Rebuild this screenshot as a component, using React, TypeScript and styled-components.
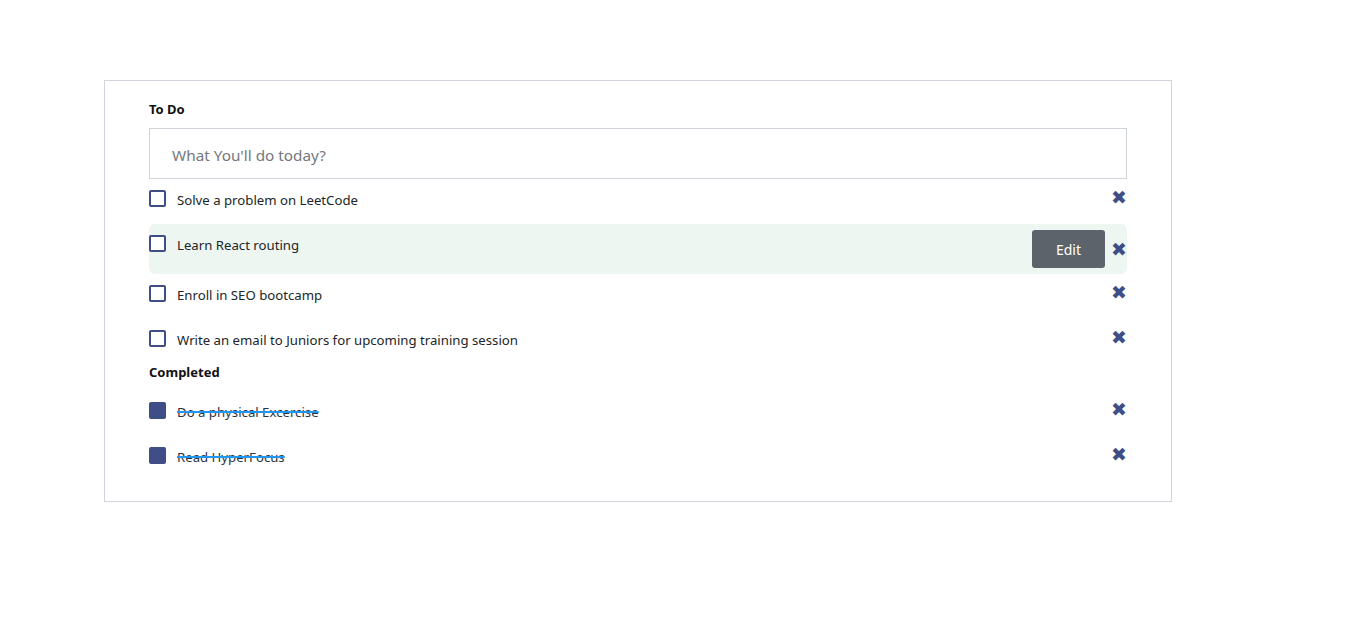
import React from "react";
import styled, { createGlobalStyle } from "styled-components";

const GlobalStyle = createGlobalStyle`
  body {
    margin: 0;
    background: #ffffff;
    font-family: "Noto Sans", "Open Sans", sans-serif;
    color: #212529;
  }
`;

const Page = styled.div`
  padding: 80px 0 0 104px;
`;

const Card = styled.section`
  box-sizing: border-box;
  width: 1068px;
  border: 1px solid #d3d3de;
  padding: 18px 44px 20px 44px;
`;

const Heading = styled.h4<{ $gap: number; $line: number }>`
  margin: 0 0 ${({ $gap }) => $gap}px 0;
  font-size: 13px;
  line-height: ${({ $line }) => $line}px;
  font-weight: 700;
  color: #111;
`;

const Input = styled.input`
  box-sizing: border-box;
  display: block;
  width: 100%;
  height: 51px;
  border: 1px solid #ced4da;
  border-radius: 0;
  padding: 2px 22px 0 22px;
  font-family: inherit;
  font-size: 15.3px;
  color: #212529;
  outline: none;

  &::placeholder {
    color: #74787e;
  }
`;

const List = styled.ul`
  list-style: none;
  margin: 0;
  padding: 0;
`;

const Row = styled.li<{ $hover?: boolean }>`
  display: flex;
  justify-content: space-between;
  min-height: 45px;
  border-radius: 6px;
  background: ${({ $hover }) => ($hover ? "#edf6f1" : "transparent")};
`;

const Label = styled.label`
  display: flex;
  align-items: flex-start;
  gap: 11px;
  align-self: flex-start;
  padding-top: 11px;
`;

const Box = styled.span<{ $checked?: boolean }>`
  box-sizing: border-box;
  width: 17px;
  height: 17px;
  border: 2px solid #3f4e87;
  border-radius: 2px;
  background: ${({ $checked }) => ($checked ? "#3f4e87" : "#fff")};
  flex-shrink: 0;
`;

const Text = styled.span<{ $done?: boolean }>`
  padding-top: 1px;
  font-size: 13.2px;
  line-height: 18px;
  color: ${({ $done }) => ($done ? "#2c3340" : "#212529")};
  text-decoration: ${({ $done }) => ($done ? "line-through" : "none")};
  text-decoration-color: #2196f3;
  text-decoration-thickness: 1.5px;
`;

const Actions = styled.div<{ $hover?: boolean }>`
  display: flex;
  align-items: ${({ $hover }) => ($hover ? "center" : "flex-start")};
  padding: ${({ $hover }) => ($hover ? "6px 0" : "10px 0 0 0")};
  gap: 6px;
`;

const EditButton = styled.button`
  width: 73px;
  height: 38px;
  border: none;
  border-radius: 3px;
  background: #5c636a;
  color: #fff;
  font-family: inherit;
  font-size: 14px;
  cursor: pointer;
`;

const Remove = styled.button`
  border: none;
  background: none;
  padding: 0;
  width: 15px;
  margin-right: 1px;
  color: #3f4e87;
  font-size: 19px;
  line-height: 17px;
  cursor: pointer;
`;

type Task = { text: string; hover?: boolean };

const todo: Task[] = [
  { text: "Solve a problem on LeetCode" },
  { text: "Learn React routing", hover: true },
  { text: "Enroll in SEO bootcamp" },
  { text: "Write an email to Juniors for upcoming training session" },
];

const done: Task[] = [
  { text: "Do a physical Excercise" },
  { text: "Read HyperFocus" },
];

const TaskRow = ({ task, checked }: { task: Task; checked?: boolean }) => (
  <Row $hover={task.hover}>
    <Label>
      <Box $checked={checked} />
      <Text $done={checked}>{task.text}</Text>
    </Label>
    <Actions $hover={task.hover}>
      {task.hover && <EditButton>Edit</EditButton>}
      <Remove aria-label="delete">✖</Remove>
    </Actions>
  </Row>
);

const App = () => {
  return (
    <>
      <GlobalStyle />
      <Page>
        <Card>
          <Heading $gap={9} $line={20}>
            To Do
          </Heading>
          <Input placeholder="What You'll do today?" />
          <List>
            {todo.map((t) => (
              <TaskRow key={t.text} task={t} />
            ))}
          </List>
          <Heading $gap={11} $line={16}>
            Completed
          </Heading>
          <List>
            {done.map((t) => (
              <TaskRow key={t.text} task={t} checked />
            ))}
          </List>
        </Card>
      </Page>
    </>
  );
};

export default App;
